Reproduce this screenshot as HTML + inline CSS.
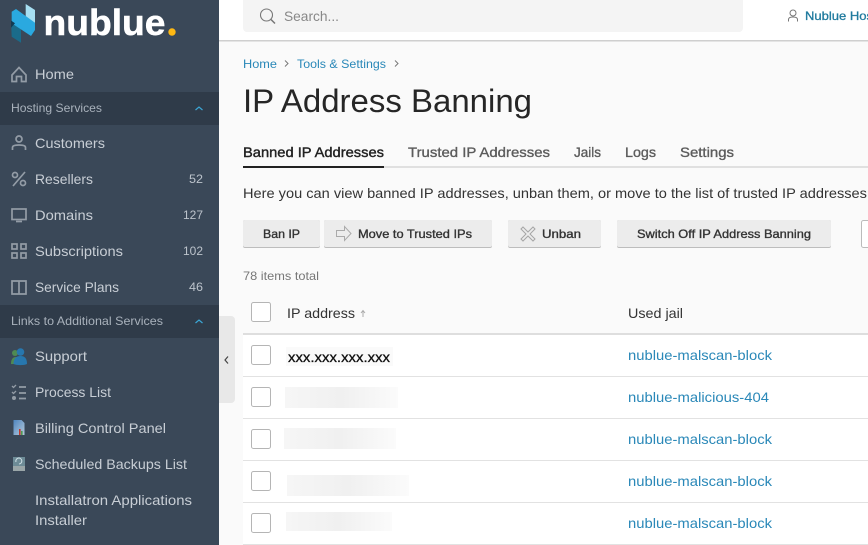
<!DOCTYPE html>
<html><head><meta charset="utf-8"><title>IP Address Banning</title>
<style>
html,body{margin:0;padding:0;width:868px;height:545px;overflow:hidden;background:#fafafa}
svg{display:block}
text{font-family:"Liberation Sans",sans-serif;white-space:pre}
.n{font-size:14px;fill:#c8ced5}
.s{font-size:12px;fill:#a9b2bc}
.c{font-size:12px;fill:#bcc3cb}
.i{fill:none;stroke:#939ca6;stroke-width:1.7}
.t{font-size:14px;fill:#5c5c5c;stroke:#5c5c5c;stroke-width:.35}
.b{font-size:12px;fill:#333;stroke:#333;stroke-width:.35}
.l{font-size:14px;fill:#2a88b8}
.bc{font-size:12px;fill:#2a88b8}
.h{font-size:14px;fill:#333}
.btn{fill:#ececec}
.bl{fill:#bdbdbd}
.cb{fill:#fff;stroke:#b5b5b5;stroke-width:1}
</style></head><body>
<svg xmlns="http://www.w3.org/2000/svg" width="868" height="545" viewBox="0 0 868 545">
<defs>
<linearGradient id="g" x1="0" x2="1" y1="0" y2="0"><stop offset="0" stop-color="#f6f6f6"/><stop offset=".5" stop-color="#f0f0f0"/><stop offset="1" stop-color="#fbfbfb"/></linearGradient>
<linearGradient id="bill" x1="0" x2="1" y1="0" y2="1"><stop offset="0" stop-color="#4f86c0"/><stop offset="1" stop-color="#b5c9da"/></linearGradient>
</defs>
<rect width="868" height="545" fill="#fafafa"/>
<!-- topbar -->
<rect x="219" width="649" height="40" fill="#fff"/>
<rect x="219" y="40" width="649" height="1.5" fill="#cfcfcf"/>
<rect x="243" y="-5" width="500" height="37" rx="4" fill="#f4f4f4"/>
<circle cx="266.500" cy="15" r="6" fill="none" stroke="#777" stroke-width="1.1"/><path d="M271 19.500l4 4" stroke="#777" stroke-width="1.500" fill="none"/>
<text x="284" y="21" font-size="14" fill="#888" textLength="55" lengthAdjust="spacingAndGlyphs">Search...</text>
<circle cx="793" cy="13" r="3" fill="none" stroke="#777"/><path d="M788.500 21.500v-2c0-2 2-2.500 4.500-2.500s4.500 .5 4.500 2.500v2" fill="none" stroke="#777"/>
<text x="805" y="20" font-size="12" fill="#1f7a9e" stroke="#1f7a9e" stroke-width=".3" textLength="68" lengthAdjust="spacingAndGlyphs">Nublue Hos</text>
<!-- handle -->
<path d="M219 316h12a4 4 0 0 1 4 4v79a4 4 0 0 1-4 4h-12z" fill="#e8e8e8"/>
<path d="M228 356.500l-3 3.500 3 3.500" fill="none" stroke="#444" stroke-width="1.200"/>
<!-- sidebar -->
<rect width="219" height="545" fill="#3a4858"/>
<rect y="92" width="219" height="33" fill="#2f3b49"/>
<rect y="305" width="219" height="33" fill="#2f3b49"/>
<!-- logo -->
<path d="M25.700 4L35 10v13.500L25.700 17z" fill="#a6dff2"/>
<path d="M11 20.700L21 28.300V42.700L11.700 36.700z" fill="#1a6b8a"/>
<path d="M11.700 11.700L16 9 35 22.700V30L31 36 11.700 23.300z" fill="#2aa9e0"/>
<path d="M11 20.500l4 2.700-4 4.500z" fill="#123a52"/>
<text x="43.500" y="35" font-size="36" font-weight="700" fill="#fff" stroke="#fff" stroke-width=".5" textLength="122" lengthAdjust="spacingAndGlyphs">nublue</text>
<circle cx="172" cy="32" r="3.700" fill="#fdb813"/>
<!-- nav -->
<path class="i" d="M12 75l7-7.500 7 7.500v6.500h-4.500v-5h-5v5H12z"/>
<text class="n" x="35" y="79" textLength="39" lengthAdjust="spacingAndGlyphs">Home</text>
<text class="s" x="11" y="112" textLength="91" lengthAdjust="spacingAndGlyphs">Hosting Services</text>
<path d="M195.500 110l3.500-3 3.500 3" fill="none" stroke="#3ba7d6" stroke-width="1.200"/>
<circle class="i" cx="19" cy="139" r="3"/><path class="i" d="M12.500 150v-2.500c0-2 3-2.500 6.500-2.500s6.500 .5 6.500 2.500v2.500"/>
<text class="n" x="35" y="148" textLength="70" lengthAdjust="spacingAndGlyphs">Customers</text>
<circle class="i" cx="15" cy="175" r="2.500"/><circle class="i" cx="23" cy="183" r="2.500"/><path class="i" d="M13 186l12-14"/>
<text class="n" x="35" y="184" textLength="58" lengthAdjust="spacingAndGlyphs">Resellers</text>
<text class="c" x="189" y="183" textLength="14" lengthAdjust="spacingAndGlyphs">52</text>
<rect class="i" x="12" y="209" width="14" height="10.500"/><path class="i" d="M16 221.500h6"/>
<text class="n" x="35" y="220" textLength="58" lengthAdjust="spacingAndGlyphs">Domains</text>
<text class="c" x="183" y="219" textLength="20" lengthAdjust="spacingAndGlyphs">127</text>
<rect class="i" x="12" y="244" width="5" height="5"/><rect class="i" x="21" y="244" width="5" height="5"/><rect class="i" x="12" y="253" width="5" height="5"/><rect class="i" x="21" y="253" width="5" height="5"/>
<text class="n" x="35" y="256" textLength="88" lengthAdjust="spacingAndGlyphs">Subscriptions</text>
<text class="c" x="183" y="255" textLength="20" lengthAdjust="spacingAndGlyphs">102</text>
<path class="i" d="M12 281h14v13H12zM19 281v13"/>
<text class="n" x="35" y="292" textLength="84" lengthAdjust="spacingAndGlyphs">Service Plans</text>
<text class="c" x="189" y="291" textLength="14" lengthAdjust="spacingAndGlyphs">46</text>
<text class="s" x="11" y="325" textLength="152" lengthAdjust="spacingAndGlyphs">Links to Additional Services</text>
<path d="M195.500 323l3.500-3 3.500 3" fill="none" stroke="#3ba7d6" stroke-width="1.200"/>
<!-- support -->
<circle cx="15" cy="353" r="3" fill="#4f8a52"/><path d="M11 364c0-5 2-7 5-7s5 2 5 7z" fill="#4f8a52"/>
<circle cx="20.500" cy="352" r="3.800" fill="#2777ae"/><path d="M13.500 364c0-6 3-8 7-8s6.500 2 6.500 8c-3 1.500-10 1.500-13.500 0z" fill="#2777ae"/>
<text class="n" x="35" y="361" textLength="52" lengthAdjust="spacingAndGlyphs">Support</text>
<!-- process -->
<path d="M12 386l1.500 1.500 2.500-2.500M12 392l1.500 1.500 2.500-2.500" fill="none" stroke="#939ca6" stroke-width="1.300"/><circle cx="14" cy="398" r="2" fill="#939ca6"/>
<path class="i" d="M19 387h7M19 393h7M19 398.500h7"/>
<text class="n" x="35" y="397" textLength="76" lengthAdjust="spacingAndGlyphs">Process List</text>
<!-- billing -->
<path d="M13.500 420h8l3 3v12h-11z" fill="url(#bill)"/><rect x="19" y="429" width="1.600" height="6" fill="#c0392b"/><rect x="21" y="431" width="1.600" height="4" fill="#4f9a52"/>
<text class="n" x="35" y="433" textLength="131" lengthAdjust="spacingAndGlyphs">Billing Control Panel</text>
<!-- backups -->
<rect x="13" y="457" width="12" height="9" fill="#6d8b96"/><rect x="13" y="466" width="12" height="5" fill="#9aa6a8"/>
<path d="M16 462a3 3 0 1 1 3 2" fill="none" stroke="#cfe0e6"/>
<text class="n" x="35" y="469" textLength="152" lengthAdjust="spacingAndGlyphs">Scheduled Backups List</text>
<text class="n" x="35" y="505" textLength="157" lengthAdjust="spacingAndGlyphs">Installatron Applications</text>
<text class="n" x="35" y="525" textLength="52" lengthAdjust="spacingAndGlyphs">Installer</text>
<!-- breadcrumb -->
<text class="bc" x="243" y="68" textLength="34" lengthAdjust="spacingAndGlyphs">Home</text>
<path d="M285 60.500l3 3-3 3" fill="none" stroke="#777"/>
<text class="bc" x="297" y="68" textLength="89" lengthAdjust="spacingAndGlyphs">Tools &amp; Settings</text>
<path d="M395 60.500l3 3-3 3" fill="none" stroke="#777"/>
<text x="243" y="112" font-size="32" fill="#262626" textLength="289" lengthAdjust="spacingAndGlyphs">IP Address Banning</text>
<!-- tabs -->
<rect x="243" y="166" width="625" height="2" fill="#e0e0e0"/>
<rect x="243" y="166" width="141" height="2" fill="#222"/>
<text x="243" y="157" font-size="14" fill="#222" stroke="#222" stroke-width=".4" textLength="141" lengthAdjust="spacingAndGlyphs">Banned IP Addresses</text>
<text class="t" x="408" y="157" textLength="142" lengthAdjust="spacingAndGlyphs">Trusted IP Addresses</text>
<text class="t" x="574" y="157" textLength="27" lengthAdjust="spacingAndGlyphs">Jails</text>
<text class="t" x="625" y="157" textLength="31" lengthAdjust="spacingAndGlyphs">Logs</text>
<text class="t" x="680" y="157" textLength="54" lengthAdjust="spacingAndGlyphs">Settings</text>
<text x="243" y="198" font-size="14" fill="#333" textLength="628" lengthAdjust="spacingAndGlyphs">Here you can view banned IP addresses, unban them, or move to the list of trusted IP addresses.</text>
<!-- buttons -->
<rect class="bl" x="243" y="220" width="77" height="28" rx="2"/><rect class="btn" x="243" y="220" width="77" height="27" rx="2"/>
<text class="b" x="263" y="238" textLength="37" lengthAdjust="spacingAndGlyphs">Ban IP</text>
<rect class="bl" x="324" y="220" width="168" height="28" rx="2"/><rect class="btn" x="324" y="220" width="168" height="27" rx="2"/>
<path d="M336.500 230.500h8v-4l6.500 7-6.500 7v-4h-8z" fill="none" stroke="#aaa"/>
<text class="b" x="358" y="238" textLength="114" lengthAdjust="spacingAndGlyphs">Move to Trusted IPs</text>
<rect class="bl" x="508" y="220" width="93" height="28" rx="2"/><rect class="btn" x="508" y="220" width="93" height="27" rx="2"/>
<path d="M521 229l2-2 5 5 5-5 2 2-5 5 5 5-2 2-5-5-5 5-2-2 5-5z" fill="none" stroke="#a5a5a5"/>
<text class="b" x="542" y="238" textLength="39" lengthAdjust="spacingAndGlyphs">Unban</text>
<rect class="bl" x="617" y="220" width="214" height="28" rx="2"/><rect class="btn" x="617" y="220" width="214" height="27" rx="2"/>
<text class="b" x="637" y="238" textLength="174" lengthAdjust="spacingAndGlyphs">Switch Off IP Address Banning</text>
<rect x="861.500" y="220.500" width="20" height="27" rx="2" fill="#fff" stroke="#bbb"/>
<text x="243" y="280" font-size="12" fill="#777" textLength="76" lengthAdjust="spacingAndGlyphs">78 items total</text>
<!-- table -->
<rect class="cb" x="251.500" y="302.500" width="19" height="19" rx="2"/>
<text class="h" x="287" y="318" textLength="68" lengthAdjust="spacingAndGlyphs">IP address</text>
<path d="M363 317v-6M361 313l2-2.500 2 2.500" fill="none" stroke="#aaa"/>
<text class="h" x="628" y="318" textLength="55" lengthAdjust="spacingAndGlyphs">Used jail</text>
<rect x="243" y="335" width="625" height="210" fill="#fff"/>
<rect x="243" y="333" width="625" height="2" fill="#dedede"/>
<rect x="243" y="376" width="625" height="1" fill="#e2e2e2"/>
<rect x="243" y="418" width="625" height="1" fill="#e2e2e2"/>
<rect x="243" y="460" width="625" height="1" fill="#e2e2e2"/>
<rect x="243" y="502" width="625" height="1" fill="#e2e2e2"/>
<rect x="243" y="544" width="625" height="1" fill="#e2e2e2"/>
<rect class="cb" x="251.500" y="345.500" width="19" height="19" rx="2"/>
<rect class="cb" x="251.500" y="387.500" width="19" height="19" rx="2"/>
<rect class="cb" x="251.500" y="429.500" width="19" height="19" rx="2"/>
<rect class="cb" x="251.500" y="471.500" width="19" height="19" rx="2"/>
<rect class="cb" x="251.500" y="513.500" width="19" height="19" rx="2"/>
<rect x="286" y="347" width="107" height="19" fill="#fafafa"/>
<text x="288" y="362" font-size="14" fill="#111" stroke="#111" stroke-width=".3" textLength="102" lengthAdjust="spacingAndGlyphs">xxx.xxx.xxx.xxx</text>
<rect x="285" y="387" width="113" height="21" fill="url(#g)"/>
<rect x="284" y="428" width="112" height="21" fill="url(#g)"/>
<rect x="287" y="475" width="122" height="21" fill="url(#g)"/>
<rect x="286" y="512" width="106" height="19" fill="url(#g)"/>
<text class="l" x="628" y="360" textLength="144" lengthAdjust="spacingAndGlyphs">nublue-malscan-block</text>
<text class="l" x="628" y="402" textLength="141" lengthAdjust="spacingAndGlyphs">nublue-malicious-404</text>
<text class="l" x="628" y="444" textLength="144" lengthAdjust="spacingAndGlyphs">nublue-malscan-block</text>
<text class="l" x="628" y="486" textLength="144" lengthAdjust="spacingAndGlyphs">nublue-malscan-block</text>
<text class="l" x="628" y="528" textLength="144" lengthAdjust="spacingAndGlyphs">nublue-malscan-block</text>
</svg>
</body></html>
